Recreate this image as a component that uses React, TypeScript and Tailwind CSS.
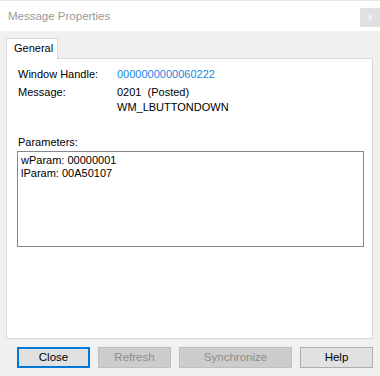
import React from 'react';

const font = { fontFamily: '"Liberation Sans", Arial, sans-serif' };

const DlgButton: React.FC<{ label: string; width: string; variant: 'default' | 'normal' | 'disabled' }> = ({ label, width, variant }) => {
    let cls = 'bg-[#e1e1e1] border border-[#adadad] text-black';
    if (variant === 'default') {
        cls = 'bg-[#e1e1e1] border-2 border-[#0078d7] text-black';
    } else if (variant === 'disabled') {
        cls = 'bg-[#cccccc] border border-[#bfbfbf] text-[#8d8d8d]';
    }
    return (
        <div className={`${width} h-[21px] flex items-center justify-center text-[11.5px] leading-none ${cls}`}>
            {label}
        </div>
    );
};

export default function App() {
    return (
        <div className="w-[380px] h-[376px] bg-[#f0f0f0] flex flex-col overflow-hidden" style={font}>
            {/* Title bar */}
            <div className="h-[31px] bg-white border-t border-[#e6e6e6] flex items-start justify-between">
                <span className="pl-[8px] pt-[8px] text-[11.5px] leading-[14px] text-[#999999]">Message Properties</span>
                <div className="mt-[7px] w-[20px] h-[19px] bg-[#e0e0e0] flex items-center justify-center">
                    <span className="text-[9px] leading-none font-bold text-[#f4f4f4]">x</span>
                </div>
            </div>

            {/* Tabs */}
            <div className="pt-[7px] pl-[6px] pr-[7px]">
                <div className="flex">
                    <div className="relative z-10 -mb-px w-[52px] h-[21px] bg-white border border-b-0 border-[#d9d9d9] pl-[7px] pt-[3px] text-[11px] leading-[13px] text-black">
                        General
                    </div>
                </div>
                <div className="h-[281px] bg-white border border-[#d9d9d9] pl-[11px] pt-[8px]">
                    <div className="flex text-[11px] leading-[15px] text-black">
                        <span className="w-[99px]">Window Handle:</span>
                        <span className="text-[#2286dc]">0000000000060222</span>
                    </div>
                    <div className="flex mt-[3px] text-[11px] leading-[15px] text-black">
                        <span className="w-[99px]">Message:</span>
                        <div className="flex flex-col">
                            <span>0201&nbsp; (Posted)</span>
                            <span>WM_LBUTTONDOWN</span>
                        </div>
                    </div>
                    <div className="mt-[20px] text-[11px] leading-[15px] text-black">Parameters:</div>
                    <div className="-ml-px mt-px w-[347px] h-[96px] border border-[#828790] bg-white pl-[3px] pt-[2px] text-[11px] leading-[13px] text-black">
                        <div>wParam: 00000001</div>
                        <div>lParam: 00A50107</div>
                    </div>
                </div>
            </div>

            {/* Buttons */}
            <div className="flex gap-[8px] pl-[17px] mt-[8px]">
                <DlgButton label="Close" width="w-[73px]" variant="default" />
                <DlgButton label="Refresh" width="w-[73px]" variant="disabled" />
                <DlgButton label="Synchronize" width="w-[113px]" variant="disabled" />
                <DlgButton label="Help" width="w-[73px]" variant="normal" />
            </div>
        </div>
    );
}
